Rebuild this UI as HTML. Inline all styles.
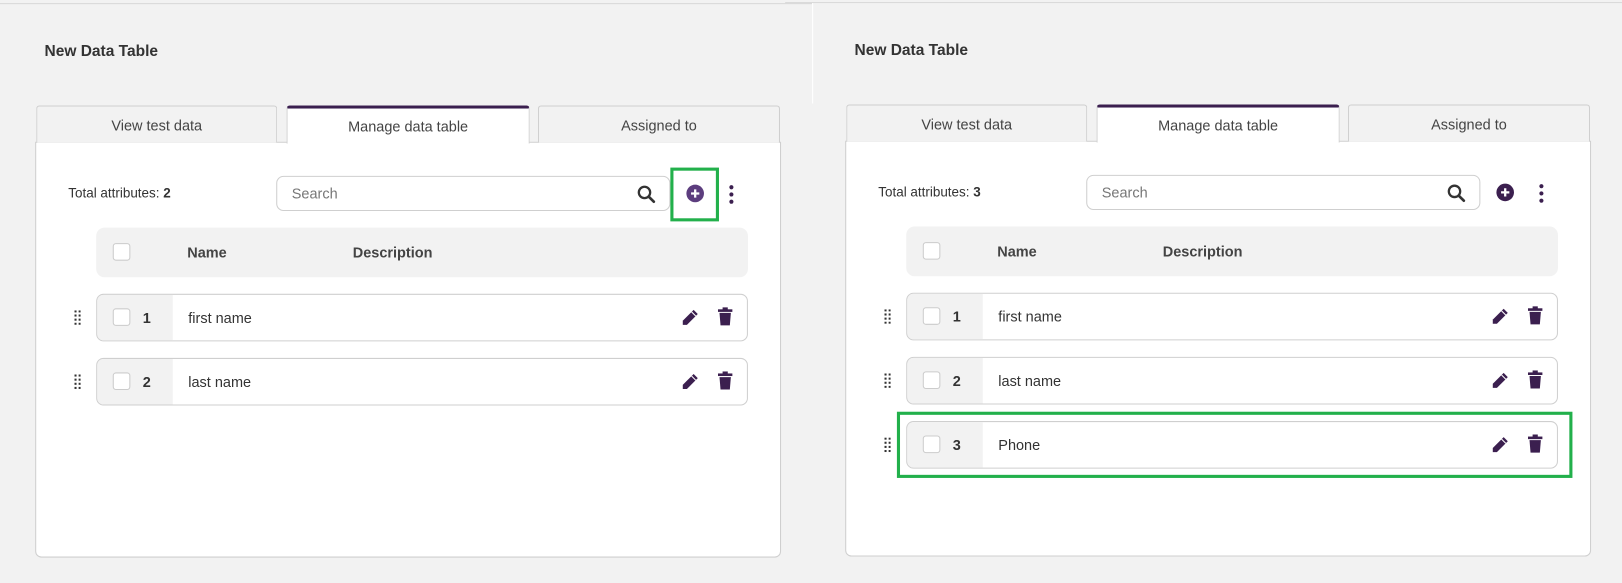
<!DOCTYPE html>
<html><head><meta charset="utf-8"><style>
*{box-sizing:border-box;margin:0;padding:0}
body{width:1622px;height:580px;background:#f2f2f2;position:relative;overflow:hidden;font-family:"Liberation Sans",Arial,sans-serif;color:#333}
#w{position:absolute;left:0;top:0;width:1568px;height:561px;transform:scale(1.0345);transform-origin:0 0}
.a{position:absolute}
.bg{background:#f2f2f2}
.card{background:#fff;border:1px solid #cfcfcf;border-radius:0 0 6px 6px}
.tab{background:#f2f2f2;border:1px solid #cfcfcf;border-bottom:none;text-align:center;font-size:14px;line-height:36px;color:#444;border-radius:3px 3px 0 0}
.tab.on{background:#fff;border-top:3px solid #3b1f4f;line-height:34px}
.srch{background:#fff;border:1px solid #cfcfcf;border-radius:7px;font-size:14px;color:#777;padding-left:14px;line-height:32px}
.hdr{background:#f2f2f2;border-radius:8px}
.cb{width:17px;height:17px;border:1px solid #ccc;border-radius:3px;background:#fff}
.row{border:1px solid #cfcfcf;border-radius:7px;background:#fff;overflow:hidden}
.row .l{position:absolute;left:0;top:0;bottom:0;width:73px;background:#f2f2f2}
.t{font-size:14px;color:#333;white-space:nowrap}
.green{border:3px solid #22b04b}
</style></head><body><div id="w">
<div class="a bg" style="left:0;top:4px;width:785px;height:560px"></div>
<div class="a" style="left:0;top:3px;width:785px;height:1px;background:#d8d8d8"></div>
<div class="a bg" style="left:786px;top:3px;width:782px;height:560px"></div>
<div class="a" style="left:759px;top:2px;width:809px;height:1px;background:#d8d8d8"></div>
<div class="a" style="left:785px;top:3px;width:1px;height:97px;background:#fff"></div>

<!-- LEFT -->
<div class="a t" style="left:43px;top:41px;font-size:15px;font-weight:bold;color:#333">New Data Table</div>
<div class="a card" style="left:34px;top:137px;width:721px;height:402px"></div>
<div class="a tab" style="left:35px;top:102px;width:233px;height:36px">View test data</div>
<div class="a tab on" style="left:277px;top:102px;width:235px;height:37px">Manage data table</div>
<div class="a tab" style="left:520px;top:102px;width:234px;height:36px">Assigned to</div>
<div class="a t" style="left:66px;top:179px;font-size:13px">Total attributes: <b>2</b></div>
<div class="a srch" style="left:267px;top:170px;width:381px;height:34px">Search</div>
<svg class="a" style="left:615px;top:178px" width="20" height="20" viewBox="0 0 20 20"><circle cx="8" cy="8" r="5.5" fill="none" stroke="#333" stroke-width="2.2"/><path d="M12 12l5 5" stroke="#333" stroke-width="2.6" stroke-linecap="round"/></svg>
<svg class="a" style="left:663px;top:178px" width="18" height="18" viewBox="0 0 18 18"><circle cx="9" cy="9" r="8.5" fill="#5c3d7e"/><path d="M9 5v8M5 9h8" stroke="#fff" stroke-width="2.2"/></svg>
<div class="a green" style="left:648px;top:162px;width:47px;height:52px"></div>
<svg class="a" style="left:704px;top:178px" width="6" height="20"><circle cx="3" cy="3" r="2" fill="#3b1f4f"/><circle cx="3" cy="10" r="2" fill="#3b1f4f"/><circle cx="3" cy="17" r="2" fill="#3b1f4f"/></svg>
<div class="a hdr" style="left:93px;top:220px;width:630px;height:48px"></div>
<div class="a cb" style="left:109px;top:235px"></div>
<div class="a t" style="left:181px;top:236px;font-weight:bold;color:#444">Name</div>
<div class="a t" style="left:341px;top:236px;font-weight:bold;color:#444">Description</div>

<!-- RIGHT -->
<div class="a t" style="left:826px;top:40px;font-size:15px;font-weight:bold;color:#333">New Data Table</div>
<div class="a card" style="left:817px;top:136px;width:721px;height:402px"></div>
<div class="a tab" style="left:818px;top:101px;width:233px;height:36px">View test data</div>
<div class="a tab on" style="left:1060px;top:101px;width:235px;height:37px">Manage data table</div>
<div class="a tab" style="left:1303px;top:101px;width:234px;height:36px">Assigned to</div>
<div class="a t" style="left:849px;top:178px;font-size:13px">Total attributes: <b>3</b></div>
<div class="a srch" style="left:1050px;top:169px;width:381px;height:34px">Search</div>
<svg class="a" style="left:1398px;top:177px" width="20" height="20" viewBox="0 0 20 20"><circle cx="8" cy="8" r="5.5" fill="none" stroke="#333" stroke-width="2.2"/><path d="M12 12l5 5" stroke="#333" stroke-width="2.6" stroke-linecap="round"/></svg>
<svg class="a" style="left:1446px;top:177px" width="18" height="18" viewBox="0 0 18 18"><circle cx="9" cy="9" r="8.5" fill="#3b1f4f"/><path d="M9 5v8M5 9h8" stroke="#fff" stroke-width="2.2"/></svg>
<svg class="a" style="left:1487px;top:177px" width="6" height="20"><circle cx="3" cy="3" r="2" fill="#3b1f4f"/><circle cx="3" cy="10" r="2" fill="#3b1f4f"/><circle cx="3" cy="17" r="2" fill="#3b1f4f"/></svg>
<div class="a hdr" style="left:876px;top:219px;width:630px;height:48px"></div>
<div class="a cb" style="left:892px;top:234px"></div>
<div class="a t" style="left:964px;top:235px;font-weight:bold;color:#444">Name</div>
<div class="a t" style="left:1124px;top:235px;font-weight:bold;color:#444">Description</div>
<div class="a green" style="left:867px;top:398px;width:653px;height:64px"></div>

<div id="rows"></div>
</div>
<script>
var rows=[[93,284,"1","first name"],[93,346,"2","last name"],[876,283,"1","first name"],[876,345,"2","last name"],[876,407,"3","Phone"]];
var h="";
rows.forEach(function(r){var x=r[0],y=r[1];
h+='<div class="a row" style="left:'+x+'px;top:'+y+'px;width:630px;height:46px"><div class="l"></div></div>';
h+='<svg class="a" style="left:'+(x-21)+'px;top:'+(y+16)+'px" width="6" height="14">';
for(var i=0;i<4;i++){h+='<rect x="0" y="'+(i*4)+'" width="2" height="2" fill="#333"/><rect x="4" y="'+(i*4)+'" width="2" height="2" fill="#333"/>';}
h+='</svg>';
h+='<div class="a cb" style="left:'+(x+16)+'px;top:'+(y+14)+'px"></div>';
h+='<div class="a t" style="left:'+(x+45)+'px;top:'+(y+15)+'px;font-weight:bold">'+r[2]+'</div>';
h+='<div class="a t" style="left:'+(x+89)+'px;top:'+(y+15)+'px">'+r[3]+'</div>';
h+='<svg class="a" style="left:'+(x+565)+'px;top:'+(y+14)+'px" width="18" height="18" viewBox="0 0 18 18"><path d="M12.5 1.5l4 4L6 16H2v-4z" fill="#3b1f4f"/><path d="M10.5 3.5l4 4" stroke="#fff" stroke-width="1"/></svg>';
h+='<svg class="a" style="left:'+(x+601)+'px;top:'+(y+13)+'px" width="14" height="18" viewBox="0 0 14 18"><rect x="0" y="2" width="14" height="2.5" fill="#3b1f4f"/><rect x="4.5" y="0" width="5" height="2.5" fill="#3b1f4f"/><path d="M1.5 5.5h11l-1 12h-9z" fill="#3b1f4f"/></svg>';
});
document.getElementById("rows").innerHTML=h;
</script>
</body></html>
